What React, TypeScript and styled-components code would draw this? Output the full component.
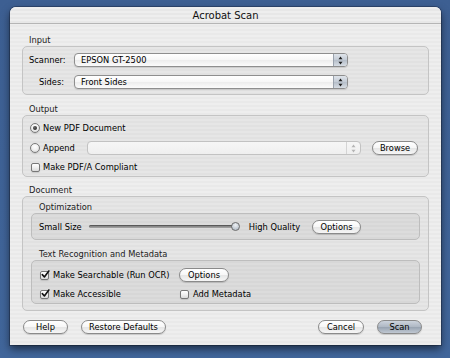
import React from "react";
import styled, { createGlobalStyle, css } from "styled-components";

const Global = createGlobalStyle`
  html, body { margin: 0; padding: 0; }
  body {
    width: 450px; height: 358px; overflow: hidden;
    background: #3f6396;
    font-family: "DejaVu Sans", "Liberation Sans", sans-serif;
  }
`;

const Desktop = styled.div`
  width: 450px; height: 358px; box-sizing: border-box;
  padding: 7px 9px 0 10px;
  background: linear-gradient(180deg, #3d5f92 0%, #41669b 100%);
`;

const Window = styled.div`
  width: 431px; height: 338px;
  display: flex; flex-direction: column;
  border-radius: 6px 6px 0 0; overflow: hidden;
  background: repeating-linear-gradient(180deg, #eeeeee 0 2px, #e9e9e9 2px 4px);
  box-shadow: 0 4px 9px rgba(0, 0, 0, 0.55), 0 0 0 1px rgba(20, 30, 50, 0.35);
`;

const TitleBar = styled.div`
  height: 17px; flex: none; box-sizing: border-box;
  display: flex; align-items: center; justify-content: center;
  font-size: 10px; color: #111;
  border-bottom: 1px solid #b5b5b5;
  background: repeating-linear-gradient(180deg, #eeeeee 0 2px, #e7e7e7 2px 4px);
`;

const Body = styled.div`
  display: flex; flex-direction: column;
  padding: 10px 12px 0 12px;
  font-size: 8.3px; color: #000;
`;

const SectionLabel = styled.div<{ $top?: number; $indent?: number }>`
  height: 12px; line-height: 12px;
  padding-left: ${(p) => p.$indent ?? 7}px;
  margin-top: ${(p) => p.$top ?? 0}px;
  color: #222;
`;

const GroupBox = styled.div<{ $inner?: boolean }>`
  border: 1px solid ${(p) => (p.$inner ? "#bdbdbd" : "#c4c4c4")};
  border-radius: 5px;
  background: ${(p) => (p.$inner ? "rgba(0,0,0,0.045)" : "rgba(0,0,0,0.03)")};
`;

const InputGrid = styled.div`
  display: grid;
  grid-template-columns: 35px 274px;
  column-gap: 10px; row-gap: 8px;
  padding: 6px 0 5px 6px;
  align-items: center;
`;

const FieldLabel = styled.div`
  text-align: right; white-space: nowrap;
`;

const PopupBox = styled.div<{ $disabled?: boolean; $width?: number }>`
  width: ${(p) => p.$width ?? 274}px; height: 14px; box-sizing: border-box;
  display: flex; align-items: stretch;
  border: 1px solid ${(p) => (p.$disabled ? "#c2c2c2" : "#8e8e8e")};
  border-radius: 4px; overflow: hidden;
  background: ${(p) =>
    p.$disabled
      ? "linear-gradient(180deg, #f6f6f6 0%, #efefef 100%)"
      : "linear-gradient(180deg, #ffffff 0%, #f6f6f6 50%, #ececec 51%, #fbfbfb 100%)"};
  box-shadow: ${(p) => (p.$disabled ? "none" : "0 1px 1px rgba(0,0,0,0.12)")};
`;

const PopupText = styled.div`
  flex: 1; padding-left: 6px; line-height: 12px; white-space: nowrap;
`;

const Stepper = styled.div<{ $disabled?: boolean }>`
  width: 13px; flex: none;
  display: flex; align-items: center; justify-content: center;
  border-left: 1px solid ${(p) => (p.$disabled ? "#d4d4d4" : "#9aa2ad")};
  ${(p) =>
    p.$disabled
      ? css`background: transparent;`
      : css`background: linear-gradient(180deg, #dfe4ea 0%, #c3cbd5 50%, #b5bec9 51%, #d6dce3 100%);`}
`;

const Arrows = ({ color }: { color: string }) => (
  <svg width="5" height="9" viewBox="0 0 5 9">
    <path d="M2.5 0.5 L4.5 3.3 L0.5 3.3 Z" fill={color} />
    <path d="M2.5 8.5 L4.5 5.7 L0.5 5.7 Z" fill={color} />
  </svg>
);

const Popup = ({ text, disabled, width }: { text?: string; disabled?: boolean; width?: number }) => (
  <PopupBox $disabled={disabled} $width={width}>
    <PopupText>{text}</PopupText>
    <Stepper $disabled={disabled}>
      <Arrows color={disabled ? "#b4b4b4" : "#1e1e1e"} />
    </Stepper>
  </PopupBox>
);

const OutputRows = styled.div`
  display: flex; flex-direction: column;
  padding: 2px 0 0 7px;
`;

const Row = styled.div<{ $h?: number }>`
  height: ${(p) => p.$h ?? 20}px;
  display: flex; align-items: center;
  white-space: nowrap;
`;

const Choice = styled.div<{ $width?: number; $gap?: number }>`
  display: flex; align-items: center; gap: ${(p) => p.$gap ?? 3}px;
  ${(p) => (p.$width ? `width: ${p.$width}px; flex: none;` : "")}
`;

const RadioCircle = styled.div<{ $on?: boolean }>`
  width: 10px; height: 10px; box-sizing: border-box; border-radius: 50%;
  border: 1px solid #7a7a7a;
  background: radial-gradient(circle at 50% 35%, #ffffff 0%, #f2f2f2 45%, #cfcfcf 100%);
  display: flex; align-items: center; justify-content: center;
  box-shadow: 0 1px 1px rgba(0,0,0,0.12);
  &::after {
    content: "";
    display: ${(p) => (p.$on ? "block" : "none")};
    width: 4px; height: 4px; border-radius: 50%;
    background: radial-gradient(circle at 40% 35%, #666 0%, #1a1a1a 100%);
  }
`;

const CheckSquare = styled.div`
  position: relative;
  width: 9px; height: 9px; box-sizing: border-box; margin-left: 1px;
  border: 1px solid #777; border-radius: 2px;
  background: linear-gradient(180deg, #ffffff 0%, #f0f0f0 50%, #dadada 100%);
  box-shadow: 0 1px 1px rgba(0,0,0,0.12);
  flex: none;
`;

const CheckMark = styled.svg`
  position: absolute; left: 0px; top: -2px;
`;

const Checkbox = ({ checked, label, gap = 3 }: { checked?: boolean; label: string; gap?: number }) => (
  <Choice $gap={gap}>
    <CheckSquare>
      {checked && (
        <CheckMark width="9" height="9" viewBox="0 0 9 9">
          <path d="M1.3 4.6 L3.4 7 L7.8 1" stroke="#111" strokeWidth="1.6" fill="none" strokeLinecap="round" strokeLinejoin="round" />
        </CheckMark>
      )}
    </CheckSquare>
    <span>{label}</span>
  </Choice>
);

const Radio = ({ on, label, width }: { on?: boolean; label: string; width?: number }) => (
  <Choice $width={width}>
    <RadioCircle $on={on} />
    <span>{label}</span>
  </Choice>
);

const Button = styled.div<{ $w: number; $default?: boolean; $ml?: number }>`
  width: ${(p) => p.$w}px; height: 14px; box-sizing: border-box; flex: none;
  margin-left: ${(p) => p.$ml ?? 0}px;
  border: 1px solid #8a8a8a; border-radius: 7px;
  display: flex; align-items: center; justify-content: center;
  font-size: 8.3px; color: #000; white-space: nowrap;
  box-shadow: 0 1px 1px rgba(0,0,0,0.15);
  background: ${(p) =>
    p.$default
      ? "linear-gradient(180deg, #ccd3dc 0%, #afb8c4 48%, #98a3b1 52%, #c0c8d2 100%)"
      : "linear-gradient(180deg, #ffffff 0%, #f7f7f7 48%, #e6e6e6 52%, #f6f6f6 100%)"};
`;

const DocPad = styled.div`
  display: flex; flex-direction: column;
  padding: 4px 8px 6px 8px;
`;

const OptRow = styled.div`
  height: 25px; display: flex; align-items: center;
  padding-left: 7px; white-space: nowrap;
`;

const Slider = styled.div`
  width: 151px; margin-left: 7px; margin-right: 9px;
  display: flex; align-items: center;
`;

const Track = styled.div`
  flex: 1; height: 3px; border-radius: 2px;
  background: linear-gradient(180deg, #6e6e6e, #a6a6a6);
  box-shadow: inset 0 1px 0 rgba(0,0,0,0.25);
`;

const Knob = styled.div`
  width: 9px; height: 9px; box-sizing: border-box; margin-left: -4px;
  border-radius: 50%; border: 1px solid #6c6c6c;
  background: radial-gradient(circle at 50% 30%, #eef1f4 0%, #c4ccd5 60%, #a9b2bd 100%);
  flex: none;
`;

const OcrGrid = styled.div`
  display: grid; grid-template-columns: 140px auto;
  grid-template-rows: 20px 18px;
  align-items: center;
  padding: 4px 0 0 7px;
  white-space: nowrap;
`;

const ButtonBar = styled.div`
  display: flex; align-items: center;
  margin-top: 9px; padding: 0 7px 0 1px;
`;

const Spacer = styled.div` flex: 1; `;

export default function App() {
  return (
    <>
      <Global />
      <Desktop>
        <Window>
          <TitleBar>Acrobat Scan</TitleBar>
          <Body>
            <SectionLabel>Input</SectionLabel>
            <GroupBox>
              <InputGrid>
                <FieldLabel>Scanner:</FieldLabel>
                <Popup text="EPSON GT-2500" />
                <FieldLabel>Sides:</FieldLabel>
                <Popup text="Front Sides" />
              </InputGrid>
            </GroupBox>

            <SectionLabel $top={8}>Output</SectionLabel>
            <GroupBox>
              <OutputRows>
                <Row>
                  <Radio on label="New PDF Document" />
                </Row>
                <Row>
                  <Radio label="Append" width={57} />
                  <Popup disabled />
                  <Button $w={46} $ml={11}>Browse</Button>
                </Row>
                <Row $h={18}>
                  <Checkbox label="Make PDF/A Compliant" />
                </Row>
              </OutputRows>
            </GroupBox>

            <SectionLabel $top={7}>Document</SectionLabel>
            <GroupBox>
              <DocPad>
                <SectionLabel $indent={8}>Optimization</SectionLabel>
                <GroupBox $inner>
                  <OptRow>
                    <span>Small Size</span>
                    <Slider>
                      <Track />
                      <Knob />
                    </Slider>
                    <span>High Quality</span>
                    <Button $w={49} $ml={12}>Options</Button>
                  </OptRow>
                </GroupBox>
                <SectionLabel $indent={8} $top={8}>Text Recognition and Metadata</SectionLabel>
                <GroupBox $inner>
                  <OcrGrid>
                    <Checkbox checked gap={4} label="Make Searchable (Run OCR)" />
                    <Button $w={50}>Options</Button>
                    <Checkbox checked gap={4} label="Make Accessible" />
                    <Checkbox gap={4} label="Add Metadata" />
                  </OcrGrid>
                </GroupBox>
              </DocPad>
            </GroupBox>

            <ButtonBar>
              <Button $w={45}>Help</Button>
              <Button $w={85} $ml={13}>Restore Defaults</Button>
              <Spacer />
              <Button $w={46}>Cancel</Button>
              <Button $w={45} $ml={13} $default>Scan</Button>
            </ButtonBar>
          </Body>
        </Window>
      </Desktop>
    </>
  );
}
